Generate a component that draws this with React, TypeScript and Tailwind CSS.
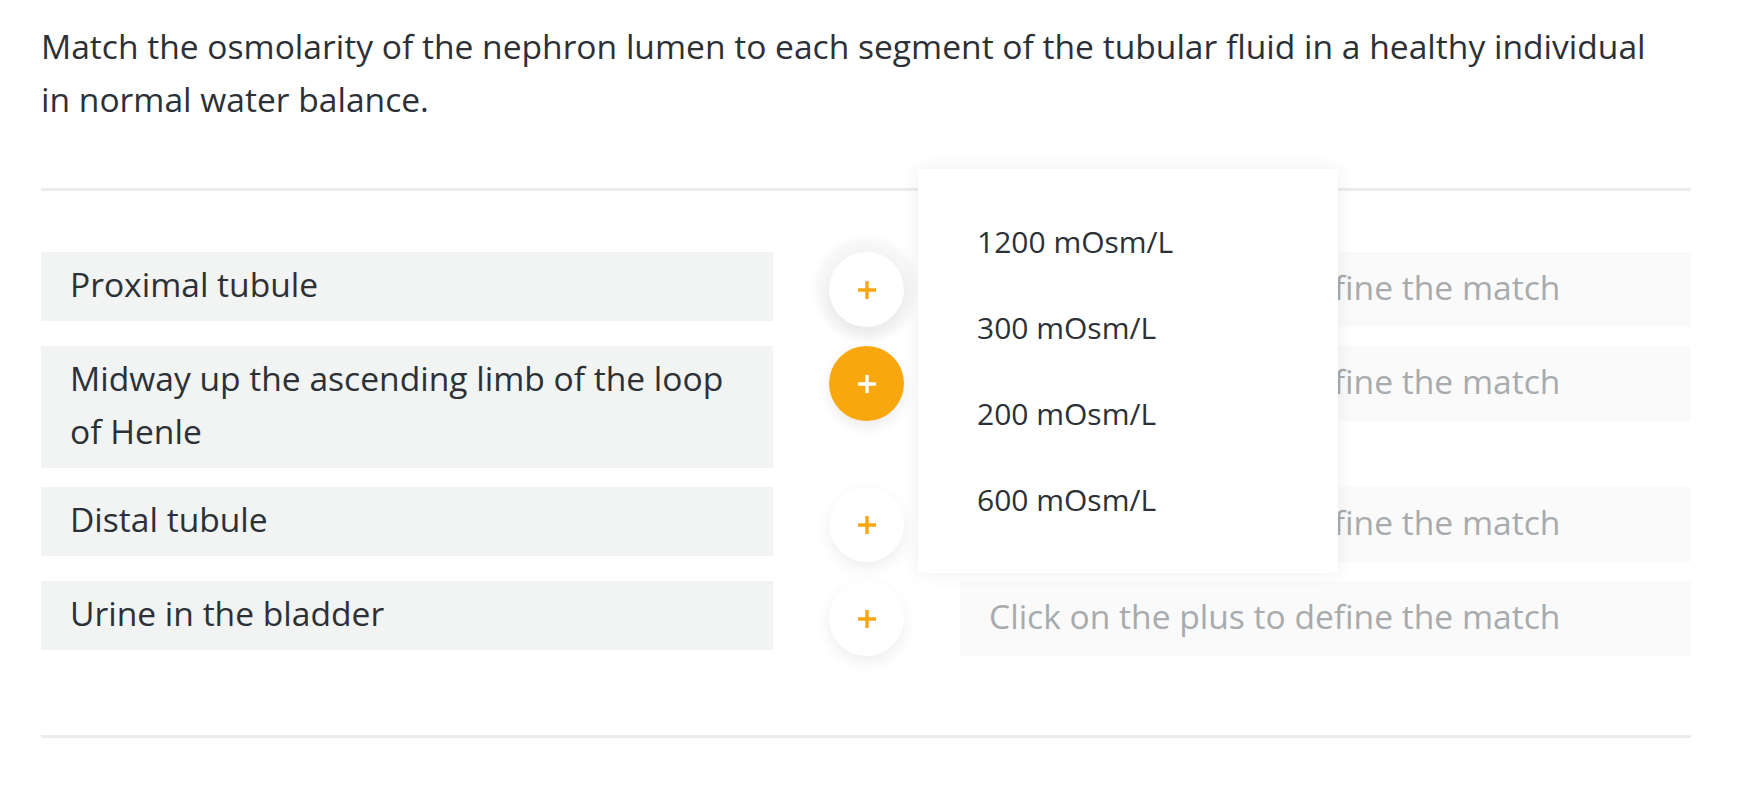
import { useState } from 'react';

const rows = [
  { id: 1, label: 'Proximal tubule' },
  { id: 2, label: 'Midway up the ascending limb of the loop of Henle' },
  { id: 3, label: 'Distal tubule' },
  { id: 4, label: 'Urine in the bladder' },
];

const options = ['1200 mOsm/L', '300 mOsm/L', '200 mOsm/L', '600 mOsm/L'];

function Plus({ color }: { color: string }) {
  return (
    <svg width="20" height="20" viewBox="0 0 20 20" fill="none">
      <path d="M10 1v18M1 10h18" stroke={color} strokeWidth="3.4" />
    </svg>
  );
}

export default function App() {
  const [open] = useState(2);

  return (
    <main className="min-h-screen bg-white font-['Open_Sans',sans-serif] text-[#2b3136]">
      <div className="relative ml-[41px] w-[1650px] pt-[20px]">
        {/* Question */}
        <p className="w-[1640px] text-[33.6px] leading-[53px]">
          Match the osmolarity of the nephron lumen to each segment of the tubular fluid in a healthy individual in
          normal water balance.
        </p>

        <div className="mt-[62px] h-[3px] bg-[#ececec]" />

        {/* Matching rows */}
        <div className="flex flex-col gap-[19px] pt-[61px]">
          {rows.map((row) => (
            <div key={row.id} className="flex items-start">
              <div className="w-[732px] bg-[#f2f3f3] px-[29px] pt-[6px] pb-[10px] text-[33.6px] leading-[53px]">
                {row.label}
              </div>
              <button
                className={`ml-[56px] flex size-[75px] shrink-0 items-center justify-center rounded-full ${
                  row.id === open
                    ? 'bg-[#f9a70f] shadow-[0_6px_14px_rgba(0,0,0,0.08)]'
                    : row.id === 1
                      ? 'bg-white shadow-[0_0_6px_14px_rgba(0,0,0,0.035),0_6px_14px_rgba(0,0,0,0.06)]'
                      : 'bg-white shadow-[0_6px_16px_rgba(0,0,0,0.07)]'
                }`}
              >
                <Plus color={row.id === open ? '#ffffff' : '#f9a70f'} />
              </button>
              <div className="ml-[56px] flex h-[75px] w-[731px] items-center bg-[#fafafa] px-[29px] pb-[4px] text-[33.6px] text-[#a7abad]">
                Click on the plus to define the match
              </div>
            </div>
          ))}
        </div>

        <div className="mt-[79px] h-[3px] bg-[#ececec]" />

        {/* Options menu */}
        <ul className="absolute left-[877px] top-[169px] w-[420px] bg-white py-[30px] pl-[59px] text-[30px] leading-[86px] shadow-[0_0_18px_rgba(0,0,0,0.07)]">
          {options.map((o) => (
            <li key={o}>{o}</li>
          ))}
        </ul>
      </div>
    </main>
  );
}
